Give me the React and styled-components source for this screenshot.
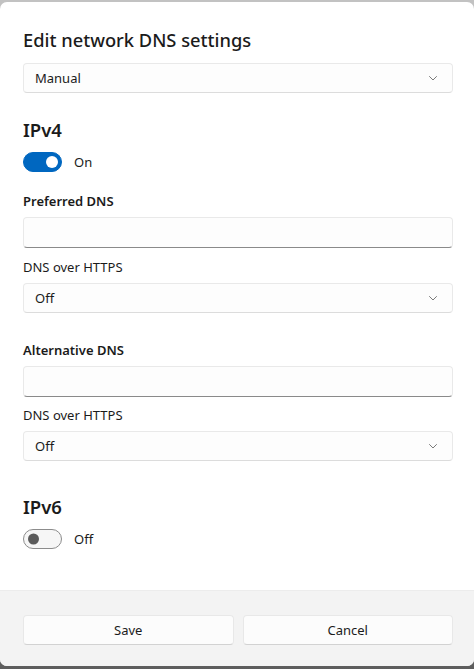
import React from "react";
import styled, { createGlobalStyle } from "styled-components";

const Global = createGlobalStyle`
  html, body { margin: 0; padding: 0; }
  body {
    width: 474px;
    height: 669px;
    overflow: hidden;
    background: linear-gradient(#c2c2c2 0px, #c2c2c2 40px, #8a8a8a 600px, #5c5c5c 669px);
    font-family: "Noto Sans", "Open Sans", sans-serif;
    color: #1b1b1b;
  }
  * { box-sizing: border-box; }
`;

const Dialog = styled.div`
  margin-top: 2px;
  height: 664px;
  background: #ffffff;
  border-radius: 7px;
  display: flex;
  flex-direction: column;
  overflow: hidden;
`;

const Body = styled.div`
  flex: 1;
  padding: 24px 21px 0 23px;
  display: flex;
  flex-direction: column;
`;

const Title = styled.h1`
  margin: 0;
  font-size: 18.3px;
  line-height: 28px;
  font-weight: 500;
`;

const Heading = styled.h2`
  margin: ${(p) => p.$top}px 0 0;
  font-size: 18.5px;
  line-height: 28px;
  font-weight: 600;
`;

const Label = styled.div`
  margin-top: ${(p) => p.$top}px;
  font-size: 13px;
  line-height: 20px;
  font-weight: ${(p) => (p.$bold ? 600 : 400)};
`;

const Select = styled.div`
  margin-top: ${(p) => p.$top}px;
  height: 30px;
  border: 1px solid #e9e9e9;
  border-bottom-color: #dcdcdc;
  border-radius: 4px;
  background: #fdfdfd;
  display: flex;
  align-items: center;
  justify-content: space-between;
  padding: 0 14px 0 11px;
  font-size: 13px;
`;

const Chevron = styled.svg`
  width: 10px;
  height: 10px;
  color: #7a7a7a;
`;

const Input = styled.div`
  margin-top: ${(p) => p.$top}px;
  height: 31px;
  border: 1px solid #e9e9e9;
  border-bottom: 1px solid #8a8a8a;
  border-radius: 4px;
  background: #fdfdfd;
`;

const ToggleRow = styled.div`
  margin-top: 8px;
  display: flex;
  align-items: center;
  gap: 12px;
  font-size: 13px;
  height: 20px;
`;

const Track = styled.div`
  width: 39px;
  height: 20px;
  border-radius: 10px;
  position: relative;
  background: ${(p) => (p.$on ? "#0067c0" : "#f6f6f6")};
  border: 1px solid ${(p) => (p.$on ? "#0067c0" : "#8c8c8c")};
`;

const Knob = styled.span`
  position: absolute;
  top: 50%;
  transform: translateY(-50%);
  left: ${(p) => (p.$on ? "22px" : "4px")};
  width: ${(p) => (p.$on ? "12px" : "11px")};
  height: ${(p) => (p.$on ? "12px" : "11px")};
  border-radius: 50%;
  background: ${(p) => (p.$on ? "#ffffff" : "#5b5b5b")};
`;

const Footer = styled.div`
  height: 76px;
  background: #f3f3f3;
  border-top: 1px solid #ececec;
  padding: 24px 21px 0 23px;
  display: grid;
  grid-template-columns: 1fr 1fr;
  gap: 9px;
  align-items: start;
`;

const Button = styled.button`
  height: 30px;
  border: 1px solid #e8e8e8;
  border-bottom-color: #d2d2d2;
  border-radius: 4px;
  background: #fcfcfc;
  font-family: inherit;
  font-size: 13px;
  color: #1b1b1b;
`;

const ChevronIcon = () => (
  <Chevron viewBox="0 0 10 10">
    <path d="M1.5 3.5 L5 7 L8.5 3.5" fill="none" stroke="currentColor" strokeWidth="1" strokeLinecap="round" strokeLinejoin="round" />
  </Chevron>
);

const Dropdown = ({ top, value }) => (
  <Select $top={top}>
    <span>{value}</span>
    <ChevronIcon />
  </Select>
);

const Toggle = ({ on, label }) => (
  <ToggleRow>
    <Track $on={on}>
      <Knob $on={on} />
    </Track>
    <span>{label}</span>
  </ToggleRow>
);

export default function App() {
  return (
    <>
      <Global />
      <Dialog>
        <Body>
          <Title>Edit network DNS settings</Title>
          <Dropdown top={9} value="Manual" />
          <Heading $top={23}>IPv4</Heading>
          <Toggle on label="On" />
          <Label $top={19} $bold>Preferred DNS</Label>
          <Input $top={6} />
          <Label $top={9}>DNS over HTTPS</Label>
          <Dropdown top={6} value="Off" />
          <Label $top={27} $bold>Alternative DNS</Label>
          <Input $top={6} />
          <Label $top={8}>DNS over HTTPS</Label>
          <Dropdown top={6} value="Off" />
          <Heading $top={32}>IPv6</Heading>
          <Toggle on={false} label="Off" />
        </Body>
        <Footer>
          <Button>Save</Button>
          <Button>Cancel</Button>
        </Footer>
      </Dialog>
    </>
  );
}
